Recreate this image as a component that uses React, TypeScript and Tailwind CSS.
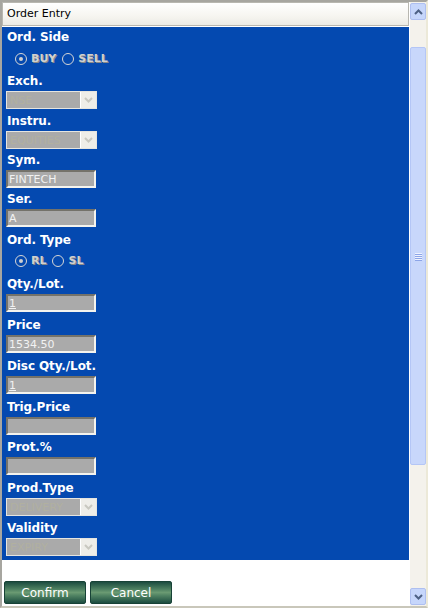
import React from "react";

// order entry window
const font = { fontFamily: '"DejaVu Sans", Verdana, sans-serif' };

const Label = ({ text }: { text: string }) => (
  <div className="h-[16px] leading-[16px] pl-[5px] text-[12px] font-bold text-white tracking-[-0.1px]">
    {text}
  </div>
);

const TextBox = ({ value, underline }: { value?: string; underline?: boolean }) => (
  <div className="ml-[4px] mt-[2px] w-[90px] h-[18px] bg-[#aaaaaa] border-2 border-t-[#74726a] border-l-[#74726a] border-b-[#f4f3ee] border-r-[#f4f3ee] flex items-center pl-[1px] text-[11px] text-[#f2f2f2] leading-none">
    <span className={underline ? "underline" : ""}>{value}</span>
  </div>
);

const Chevron = ({ color }: { color: string }) => (
  <svg width="9" height="6" viewBox="0 0 9 6">
    <path d="M1 1 L4.5 4.5 L8 1" stroke={color} strokeWidth="2" fill="none" />
  </svg>
);

const SelectBox = ({ value }: { value: string }) => (
  <div className="ml-[4px] mt-[2px] w-[91px] h-[18px] bg-[#aaaaaa] border border-[#e6e5e0] flex items-stretch">
    <div className="flex-1 flex items-center pl-[3px] text-[11px] text-[#b1b0a0] leading-none overflow-hidden whitespace-nowrap">
      {value}
    </div>
    <div className="w-[16px] bg-[#eeede8] border-l border-[#ffffff] flex items-center justify-center">
      <Chevron color="#c9c8c0" />
    </div>
  </div>
);

const Radio = ({ label, checked }: { label: string; checked?: boolean }) => (
  <div className="flex items-center gap-[4px]">
    <div className="w-[12px] h-[12px] rounded-full border border-[#d6d6d6] flex items-center justify-center">
      {checked && <div className="w-[4px] h-[4px] rounded-full bg-[#cfcfcf]" />}
    </div>
    <span className="text-[11px] font-bold text-[#d0d0d0] [text-shadow:1px_1px_0_#8a8a8a]">{label}</span>
  </div>
);

const Button = ({ text }: { text: string }) => (
  <div className="w-[82px] h-[23px] rounded-[2px] border border-[#174236] bg-[linear-gradient(to_bottom,#1c4c40_0%,#4f8262_35%,#6a9a72_50%,#4f8262_65%,#1c4c40_100%)] flex items-center justify-center text-[12px] text-white">
    {text}
  </div>
);

const ScrollBar = () => (
  <div className="w-[16px] ml-[1px] bg-[#f4f2ec] flex flex-col">
    <div className="h-[17px] mt-[1px] rounded-[2px] bg-[#c6d6fb] border border-[#aebff0] flex items-center justify-center">
      <svg width="9" height="6" viewBox="0 0 9 6">
        <path d="M1 5 L4.5 1.5 L8 5" stroke="#4d6185" strokeWidth="2" fill="none" />
      </svg>
    </div>
    <div className="h-[27px]" />
    <div className="h-[418px] rounded-[2px] bg-[#c8d7fb] border border-[#b4c6f6] flex flex-col items-center justify-center gap-[1px]">
      {[0, 1, 2, 3].map((i) => (
        <div key={i} className="w-[7px] h-[1px] bg-[#eef2fe] shadow-[0_1px_0_#8ca5e8]" />
      ))}
    </div>
    <div className="flex-1" />
    <div className="h-[17px] mb-[1px] rounded-[2px] bg-[#c6d6fb] border border-[#aebff0] flex items-center justify-center">
      <Chevron color="#4d6185" />
    </div>
  </div>
);

export default function App() {
  return (
    <div
      className="w-[428px] h-[608px] bg-white border-2 border-t-[#a7a6a0] border-l-[#a7a6a0] border-r-[#ece9d8] border-b-[#c9c7ba] flex"
      style={font}
    >
      <div className="w-[407px] flex flex-col">
        <div className="h-[24px] bg-[linear-gradient(to_bottom,#ffffff,#f6f5f0_60%,#ecebe5)] border border-[#b8b7b0] flex items-center pl-[4px] text-[11px] text-black">
          Order Entry
        </div>
        <div className="mt-[1px] bg-[#0449b0] pt-[2px] pb-[4px] flex flex-col">
          <Label text="Ord. Side" />
          <div className="mt-[5px] h-[18px] flex items-center gap-[6px] pl-[13px]">
            <Radio label="BUY" checked />
            <Radio label="SELL" />
          </div>
          <div className="mt-[5px]">
            <Label text="Exch." />
            <SelectBox value="NSE" />
          </div>
          <div className="mt-[4px]">
            <Label text="Instru." />
            <SelectBox value="EQUITIES" />
          </div>
          <div className="mt-[3px]">
            <Label text="Sym." />
            <TextBox value="FINTECH" />
          </div>
          <div className="mt-[3px]">
            <Label text="Ser." />
            <TextBox value="A" />
          </div>
          <div className="mt-[5px]">
            <Label text="Ord. Type" />
          </div>
          <div className="mt-[4px] h-[18px] flex items-center gap-[6px] pl-[13px]">
            <Radio label="RL" checked />
            <Radio label="SL" />
          </div>
          <div className="mt-[6px]">
            <Label text="Qty./Lot." />
            <TextBox value="1" underline />
          </div>
          <div className="mt-[5px]">
            <Label text="Price" />
            <TextBox value="1534.50" />
          </div>
          <div className="mt-[5px]">
            <Label text="Disc Qty./Lot." />
            <TextBox value="1" underline />
          </div>
          <div className="mt-[5px]">
            <Label text="Trig.Price" />
            <TextBox />
          </div>
          <div className="mt-[4px]">
            <Label text="Prot.%" />
            <TextBox />
          </div>
          <div className="mt-[5px]">
            <Label text="Prod.Type" />
            <SelectBox value="DELIVERY" />
          </div>
          <div className="mt-[4px]">
            <Label text="Validity" />
            <SelectBox value="EXPIRY" />
          </div>
        </div>
        <div className="flex-1" />
        <div className="flex gap-[4px] pl-[2px] mb-[2px]">
          <Button text="Confirm" />
          <Button text="Cancel" />
        </div>
      </div>
      <ScrollBar />
    </div>
  );
}
